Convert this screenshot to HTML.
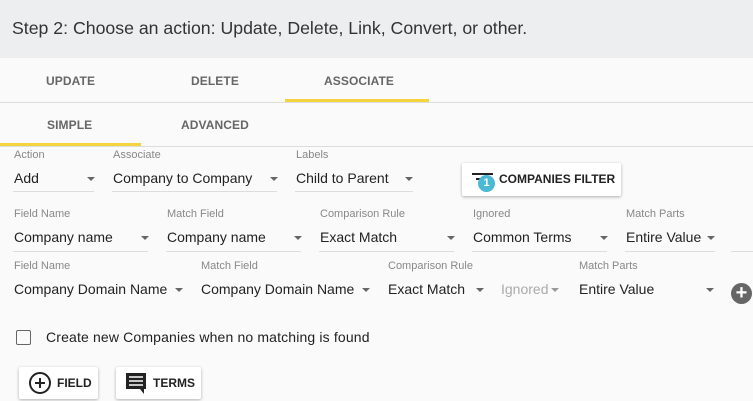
<!DOCTYPE html><html><head><style>
body{margin:0;width:753px;height:401px;background:#fafafa;font-family:"Liberation Sans",sans-serif;position:relative;overflow:hidden;color:#222}
.a{position:absolute;white-space:nowrap}
.hdr{left:0;top:0;width:753px;height:58px;background:#eceef0}
.t{font-size:12px;color:#666;font-weight:bold;letter-spacing:0.1px}
.lb{font-size:11px;color:#888}
.v{font-size:14px;color:#222}
.ul{height:1px;background:#ddd}
.ar{width:0;height:0;border-left:4px solid transparent;border-right:4px solid transparent;border-top:4px solid #666}
.btn{background:#fff;box-shadow:0 1px 3px rgba(0,0,0,.3);border-radius:2px;font-size:12px;font-weight:bold;color:#222}
</style></head><body>
<div class="a hdr"></div>
<div class="a" style="left:12px;top:18px;font-size:17.7px;color:#333">Step 2: Choose an action: Update, Delete, Link, Convert, or other.</div>
<div class="a t" style="left:46px;top:74px">UPDATE</div>
<div class="a t" style="left:191px;top:74px">DELETE</div>
<div class="a t" style="left:324px;top:74px">ASSOCIATE</div>
<div class="a" style="left:285px;top:99px;width:144px;height:3px;background:#f5d33f"></div>
<div class="a" style="left:0;top:102px;width:753px;height:1px;background:#ddd"></div>
<div class="a t" style="left:47px;top:118px">SIMPLE</div>
<div class="a t" style="left:181px;top:118px">ADVANCED</div>
<div class="a" style="left:0;top:143px;width:141px;height:3px;background:#f5d33f"></div>
<div class="a" style="left:0;top:146px;width:753px;height:1px;background:#ddd"></div>

<div class="a lb" style="left:14px;top:149px">Action</div>
<div class="a v" style="left:14px;top:170px">Add</div><div class="a ar" style="left:87px;top:177px"></div><div class="a ul" style="left:13px;top:191px;width:81px"></div>
<div class="a lb" style="left:113px;top:149px">Associate</div>
<div class="a v" style="left:113px;top:170px">Company to Company</div><div class="a ar" style="left:270px;top:177px"></div><div class="a ul" style="left:112px;top:191px;width:165px"></div>
<div class="a lb" style="left:296px;top:149px">Labels</div>
<div class="a v" style="left:296px;top:170px">Child to Parent</div><div class="a ar" style="left:405px;top:177px"></div><div class="a ul" style="left:295px;top:191px;width:118px"></div>
<div class="a btn" style="left:462px;top:163px;width:159px;height:33px"></div>
<div class="a" style="left:472px;top:173px;width:21px;height:2px;background:#222"></div>
<div class="a" style="left:476px;top:178px;width:13px;height:2px;background:#222"></div>
<div class="a" style="left:478px;top:175px;width:17px;height:17px;border-radius:50%;background:#4bb8d6;color:#fff;font-size:11px;font-weight:bold;text-align:center;line-height:17px">1</div>
<div class="a" style="left:499px;top:172px;font-size:12px;font-weight:bold;color:#222">COMPANIES FILTER</div>

<div class="a lb" style="left:14px;top:208px">Field Name</div>
<div class="a v" style="left:14px;top:229px">Company name</div><div class="a ar" style="left:141px;top:236px"></div><div class="a ul" style="left:13px;top:251px;width:135px"></div>
<div class="a lb" style="left:167px;top:208px">Match Field</div>
<div class="a v" style="left:167px;top:229px">Company name</div><div class="a ar" style="left:294px;top:236px"></div><div class="a ul" style="left:166px;top:251px;width:135px"></div>
<div class="a lb" style="left:320px;top:208px">Comparison Rule</div>
<div class="a v" style="left:320px;top:229px">Exact Match</div><div class="a ar" style="left:447px;top:236px"></div><div class="a ul" style="left:319px;top:251px;width:135px"></div>
<div class="a lb" style="left:473px;top:208px">Ignored</div>
<div class="a v" style="left:473px;top:229px">Common Terms</div><div class="a ar" style="left:600px;top:236px"></div><div class="a ul" style="left:472px;top:251px;width:135px"></div>
<div class="a lb" style="left:626px;top:208px">Match Parts</div>
<div class="a v" style="left:626px;top:229px">Entire Value</div><div class="a ar" style="left:707px;top:236px"></div><div class="a ul" style="left:625px;top:251px;width:90px"></div>
<div class="a ul" style="left:731px;top:251px;width:22px"></div>

<div class="a lb" style="left:14px;top:260px">Field Name</div>
<div class="a v" style="left:14px;top:281px">Company Domain Name</div><div class="a ar" style="left:175px;top:288px"></div>
<div class="a lb" style="left:201px;top:260px">Match Field</div>
<div class="a v" style="left:201px;top:281px">Company Domain Name</div><div class="a ar" style="left:362px;top:288px"></div>
<div class="a lb" style="left:388px;top:260px">Comparison Rule</div>
<div class="a v" style="left:388px;top:281px">Exact Match</div><div class="a ar" style="left:476px;top:288px"></div>
<div class="a v" style="left:501px;top:281px;color:#aaa">Ignored</div><div class="a ar" style="left:551px;top:288px;border-top-color:#999"></div>
<div class="a lb" style="left:579px;top:260px">Match Parts</div>
<div class="a v" style="left:579px;top:281px">Entire Value</div><div class="a ar" style="left:706px;top:288px"></div>
<div class="a" style="left:731px;top:283px;width:21px;height:21px;border-radius:50%;background:#666;color:#fff;font-size:20px;font-weight:bold;text-align:center;line-height:21px">+</div>

<div class="a" style="left:16px;top:330px;width:13px;height:13px;border:1.5px solid #666;border-radius:2px"></div>
<div class="a" style="left:46px;top:329px;font-size:14px;color:#222;letter-spacing:0.15px">Create new Companies when no matching is found</div>

<div class="a btn" style="left:19px;top:367px;width:79px;height:32px"></div>
<svg class="a" style="left:28px;top:371px" width="24" height="24" viewBox="0 0 24 24"><circle cx="12" cy="12" r="10" fill="none" stroke="#222" stroke-width="2"/><path d="M12 7v10M7 12h10" stroke="#222" stroke-width="2"/></svg>
<div class="a" style="left:57px;top:376px;font-size:12px;font-weight:bold">FIELD</div>
<div class="a btn" style="left:116px;top:367px;width:85px;height:32px"></div>
<svg class="a" style="left:125px;top:372px" width="24" height="24" viewBox="0 0 24 24"><path d="M1 1h20v16h-2v5l-4-5H1z" fill="#222"/><path d="M4 5h14M4 9h14M4 13h14" stroke="#fff" stroke-width="1.6"/></svg>
<div class="a" style="left:153px;top:376px;font-size:12px;font-weight:bold">TERMS</div>
</body></html>
